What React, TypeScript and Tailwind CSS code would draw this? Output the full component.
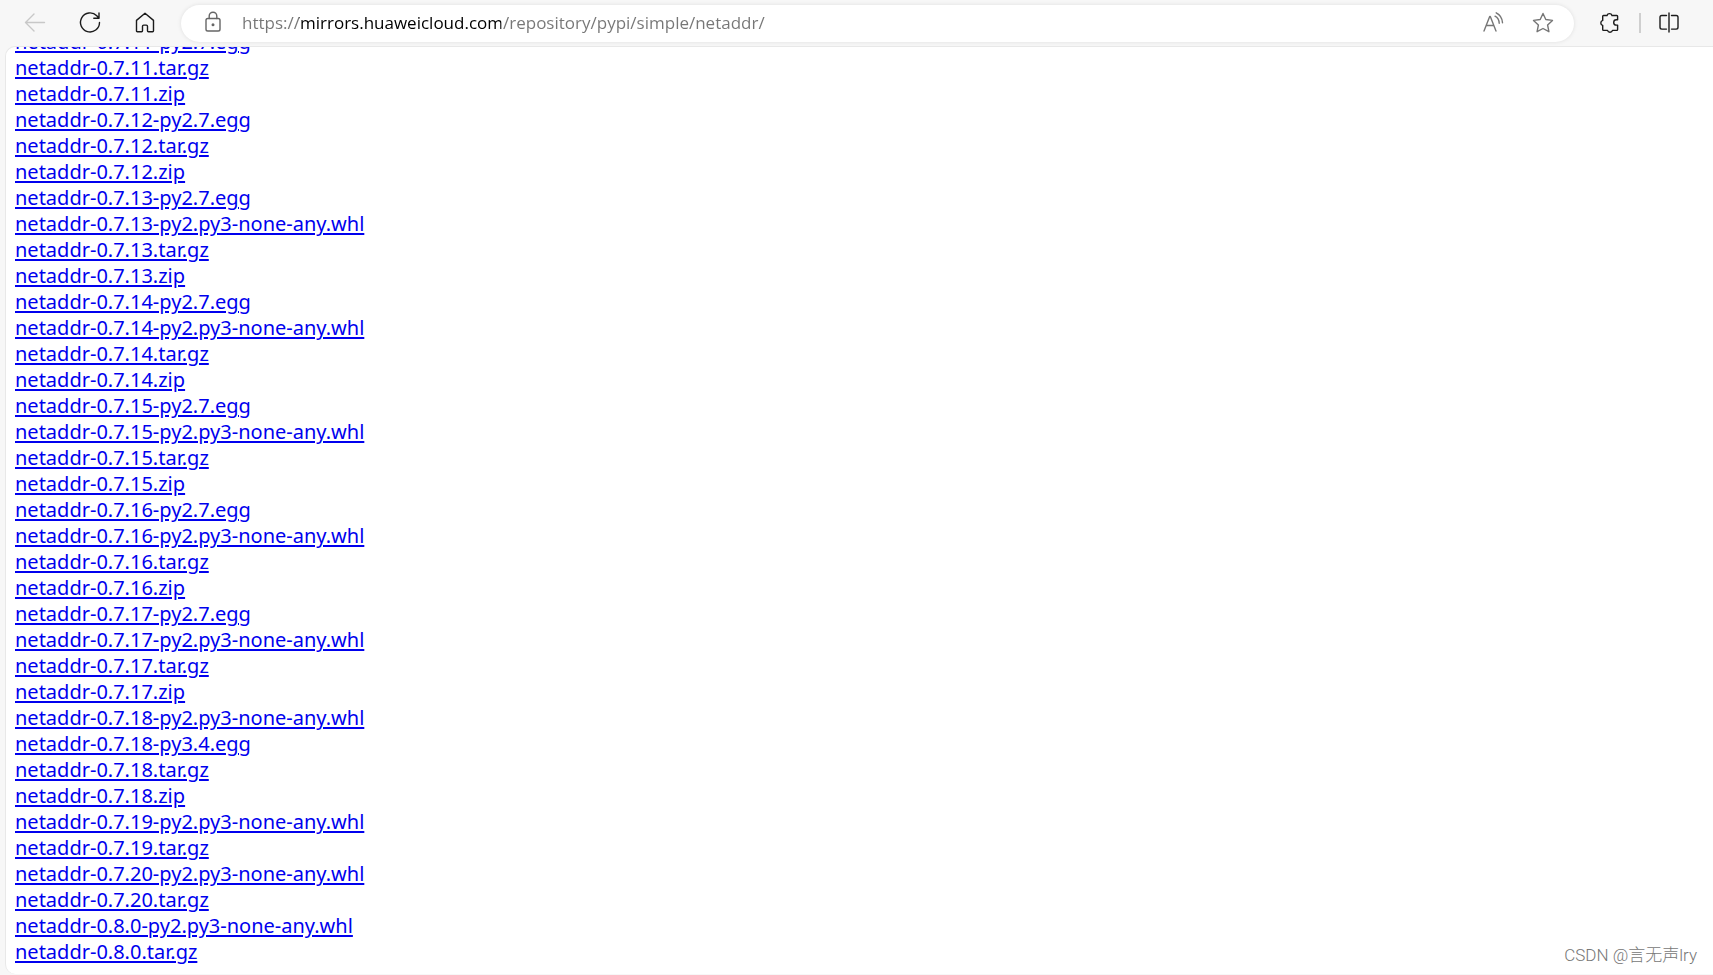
import type { ReactNode } from "react";

const FILES = [
  "netaddr-0.7.11-py2.7.egg",
  "netaddr-0.7.11.tar.gz",
  "netaddr-0.7.11.zip",
  "netaddr-0.7.12-py2.7.egg",
  "netaddr-0.7.12.tar.gz",
  "netaddr-0.7.12.zip",
  "netaddr-0.7.13-py2.7.egg",
  "netaddr-0.7.13-py2.py3-none-any.whl",
  "netaddr-0.7.13.tar.gz",
  "netaddr-0.7.13.zip",
  "netaddr-0.7.14-py2.7.egg",
  "netaddr-0.7.14-py2.py3-none-any.whl",
  "netaddr-0.7.14.tar.gz",
  "netaddr-0.7.14.zip",
  "netaddr-0.7.15-py2.7.egg",
  "netaddr-0.7.15-py2.py3-none-any.whl",
  "netaddr-0.7.15.tar.gz",
  "netaddr-0.7.15.zip",
  "netaddr-0.7.16-py2.7.egg",
  "netaddr-0.7.16-py2.py3-none-any.whl",
  "netaddr-0.7.16.tar.gz",
  "netaddr-0.7.16.zip",
  "netaddr-0.7.17-py2.7.egg",
  "netaddr-0.7.17-py2.py3-none-any.whl",
  "netaddr-0.7.17.tar.gz",
  "netaddr-0.7.17.zip",
  "netaddr-0.7.18-py2.py3-none-any.whl",
  "netaddr-0.7.18-py3.4.egg",
  "netaddr-0.7.18.tar.gz",
  "netaddr-0.7.18.zip",
  "netaddr-0.7.19-py2.py3-none-any.whl",
  "netaddr-0.7.19.tar.gz",
  "netaddr-0.7.20-py2.py3-none-any.whl",
  "netaddr-0.7.20.tar.gz",
  "netaddr-0.8.0-py2.py3-none-any.whl",
  "netaddr-0.8.0.tar.gz",
];

function Icon({ children }: { children: ReactNode }) {
  return (
    <svg
      viewBox="0 0 24 24"
      className="size-6"
      fill="none"
      stroke="currentColor"
      strokeWidth="1.4"
      strokeLinecap="round"
      strokeLinejoin="round"
      aria-hidden="true"
    >
      {children}
    </svg>
  );
}

function ToolButton({ label, className, children }: { label: string; className: string; children: ReactNode }) {
  return (
    <button type="button" aria-label={label} className={`shrink-0 ${className}`}>
      <Icon>{children}</Icon>
    </button>
  );
}

function Toolbar() {
  return (
    <header className="flex h-[46px] shrink-0 items-center pr-8 pl-[18px]">
      <nav className="flex shrink-0 gap-[31px]">
        <ToolButton label="Back" className="text-[#c8c8c8]">
          <path d="M21.5 11.5H2.5M11 3l-8.5 8.5L11 20" />
        </ToolButton>
        <ToolButton label="Refresh" className="text-[#1b1b1b]">
          <path d="M21.5 11.5A9.5 9.5 0 1 1 18.8 4.8l2.2 2.4M21 2v5.2h-5.2" />
        </ToolButton>
        <ToolButton label="Home" className="text-[#1b1b1b]">
          <path d="M3.5 9.4 12 2.2l8.5 7.2v10.4q0 .9-.9.9h-4.200q-.9 0-.9-.9v-4.500q0-1.200-1.200-1.200h-2.600q-1.200 0-1.200 1.200v4.500q0 .9-.9.9H4.400q-.9 0-.9-.9z" />
        </ToolButton>
      </nav>
      <form className="ml-6 flex h-[37px] min-w-0 flex-1 items-center rounded-full bg-white pr-[19px] pl-5 shadow-[0_0_4px_#0000001a]">
        <ToolButton label="Site information" className="text-[#666666]">
          <rect x="5" y="7.500" width="14" height="12.500" rx="1.800" />
          <path d="M8.200 7.500V5a3.800 3.800 0 0 1 7.600 0v2.500" />
          <circle cx="12" cy="13.800" r=".8" fill="currentColor" />
        </ToolButton>
        <input
          type="text"
          aria-label="Address"
          defaultValue="https://mirrors.huaweicloud.com/repository/pypi/simple/netaddr/"
          className="ml-[17px] h-8 min-w-0 flex-1 bg-[linear-gradient(to_right,#767676_57px,#000_57px,#000_259px,#767676_259px)] bg-clip-text pb-0.5 font-['Open_Sans',sans-serif] text-[17px] text-transparent outline-none"
        />
        <div className="flex shrink-0 gap-[25px]">
          <ToolButton label="Read aloud" className="text-[#767676]">
            <path d="M2 20 7.700 5.500h.6L14 20M4.200 14.500h7.600M13 5.200q4 2 4.200 7M14.200 1.800q6 3 6.300 10" />
          </ToolButton>
          <ToolButton label="Add to favorites" className="text-[#767676]">
            <path d="m12 2.500 2.800 6 6.700.9-4.900 4.600 1.300 6.700-5.900-3.200-5.900 3.200 1.300-6.700-4.900-4.600 6.700-.9z" />
          </ToolButton>
        </div>
      </form>
      <div className="ml-6 flex shrink-0 items-center">
        <ToolButton label="Extensions" className="text-[#1b1b1b]">
          <path d="M5.500 4.500h3.500a2.600 2.600 0 0 1 5 0h4.800q.8 0 .8.800v3.400h-1.200a2.700 2.700 0 0 0 0 5.400h1.200v4.500q0 .8-.8.800h-4.300a2.600 2.600 0 0 1-5 0H5.500q-.8 0-.8-.8v-4.200a2.600 2.600 0 0 1 0-5V5.300q0-.8.800-.8z" />
        </ToolButton>
        <span className="mr-4 ml-[17px] h-5 w-0.5 bg-[#cfcfcf]" />
        <ToolButton label="Split screen" className="text-[#1b1b1b]">
          <path d="M12 2v19M9.500 4.500H4.800Q3 4.500 3 6.300v10q0 1.800 1.800 1.800h4.700M14.500 4.500h4.700Q21 4.500 21 6.300v10q0 1.800-1.800 1.800h-4.700" />
        </ToolButton>
      </div>
    </header>
  );
}

export default function App() {
  return (
    <div className="relative flex h-screen flex-col overflow-hidden bg-[#f7f7f7] pb-px pl-[5px]">
      <Toolbar />
      <main className="flex min-h-0 flex-1 flex-col justify-end overflow-hidden rounded-l-[10px] border-t border-l border-[#e8e8e8] bg-white pb-[9px] pl-[9px]">
        <ul className="font-['Noto_Sans',sans-serif] text-xl leading-[26px] text-[#0000ee]">
          {FILES.map((file) => (
            <li key={file}>
              <a href={`#${file}`} className="underline decoration-2 underline-offset-2">
                {file}
              </a>
            </li>
          ))}
        </ul>
      </main>
      <p className="absolute right-4 bottom-2 font-['Roboto','Noto_Sans_CJK_SC',sans-serif] text-[17px] leading-6 font-light text-[#777777]">
        CSDN @言无声lry
      </p>
    </div>
  );
}
